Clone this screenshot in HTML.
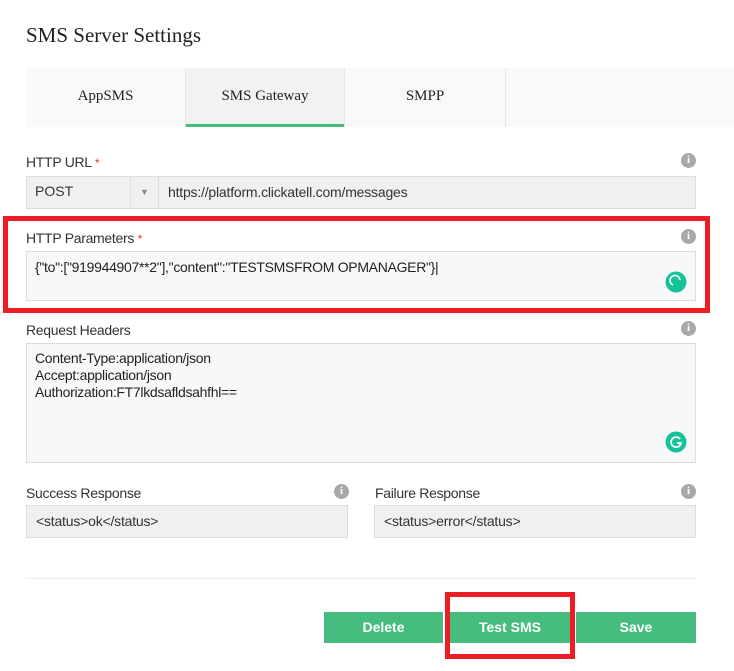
<!DOCTYPE html>
<html><head><meta charset="utf-8"><style>
*{box-sizing:border-box;margin:0;padding:0}
body{width:734px;height:671px;background:#fff;position:relative;overflow:hidden;font-family:"Liberation Sans",sans-serif;color:#333}
.a{position:absolute}
.title{left:26px;top:23px;font-family:"Liberation Serif",serif;font-size:21px;color:#222}
.tabs{left:26px;top:68px;width:708px;height:59px;background:#f9f9f9}
.tab{position:absolute;top:0;height:59px;line-height:56px;text-align:center;font-family:"Liberation Serif",serif;font-size:15px;color:#222}
.lbl{font-size:14px;color:#333;letter-spacing:-0.3px}
.req{color:#e33;font-size:12px}
.box{background:#f0f0f0;border:1px solid #ddd;font-size:14px;color:#333;padding-left:9px;letter-spacing:-0.2px}
.ta{background:#f8f8fa;border:1px solid #ddd;font-size:14px;color:#222;padding:7px 8px;line-height:17px;letter-spacing:-0.3px}
.info{width:15px;height:15px;border-radius:50%;background:#a8a8a8;color:#fff;font-size:11px;font-weight:bold;text-align:center;line-height:15px;font-family:"Liberation Serif",serif}
.g{width:21px;height:21px;border-radius:50%;background:#15c39a}
.btn{top:612px;height:31px;background:#46bd7f;color:#fff;font-size:14px;font-weight:bold;text-align:center;line-height:31px;width:120px}
.red{border:5px solid #ee1c25}
</style></head><body>
<div class="a title">SMS Server Settings</div>
<div class="a tabs">
 <div class="tab" style="left:0;width:159px">AppSMS</div>
 <div class="tab" style="left:159px;width:160px;background:#f2f2f2;border-left:1px solid #e6e6e6;border-right:1px solid #e6e6e6">SMS Gateway<div style="position:absolute;left:0;right:0;bottom:0;height:3px;background:#46bd7f"></div></div>
 <div class="tab" style="left:319px;width:161px;border-right:1px solid #e6e6e6">SMPP</div>
</div>

<div class="a lbl" style="left:26px;top:154px">HTTP URL <span class="req">*</span></div>
<div class="a info" style="left:681px;top:153px">i</div>
<div class="a box" style="left:26px;top:176px;width:670px;height:33px"></div>
<div class="a" style="left:26px;top:176px;width:104px;height:33px;line-height:31px;padding-left:9px;font-size:14px">POST</div>
<div class="a" style="left:130px;top:177px;width:29px;height:31px;border-left:1px solid #ddd;border-right:1px solid #ddd;text-align:center;line-height:31px;font-size:9px;color:#888">▼</div>
<div class="a" style="left:168px;top:176px;line-height:33px;font-size:14px;letter-spacing:-0.2px">https://platform.clickatell.com/messages</div>

<div class="a red" style="left:3px;top:216px;width:707px;height:97px"></div>
<div class="a lbl" style="left:26px;top:230px">HTTP Parameters <span class="req">*</span></div>
<div class="a info" style="left:681px;top:229px">i</div>
<div class="a ta" style="left:26px;top:251px;width:670px;height:50px">{"to":["919944907**2"],"content":"TESTSMSFROM OPMANAGER"}|</div>
<svg class="a" style="left:665px;top:271px" width="22" height="22"><circle cx="11" cy="11" r="10.5" fill="#15c39a"/><path d="M8 14 A5 5 0 1 1 15 9" stroke="#fff" stroke-width="1.6" fill="none"/></svg>

<div class="a lbl" style="left:26px;top:322px">Request Headers</div>
<div class="a info" style="left:681px;top:321px">i</div>
<div class="a ta" style="left:26px;top:343px;width:670px;height:120px;padding-top:6px">Content-Type:application/json<br>Accept:application/json<br>Authorization:FT7lkdsafldsahfhl==</div>
<svg class="a" style="left:665px;top:431px" width="22" height="22"><circle cx="11" cy="11" r="10.5" fill="#15c39a"/><path d="M15 8 A5 5 0 1 0 16 12 L12 12" stroke="#fff" stroke-width="1.8" fill="none"/></svg>

<div class="a lbl" style="left:26px;top:485px">Success Response</div>
<div class="a info" style="left:334px;top:484px">i</div>
<div class="a box" style="left:26px;top:505px;width:322px;height:33px;line-height:31px">&lt;status&gt;ok&lt;/status&gt;</div>
<div class="a lbl" style="left:375px;top:485px">Failure Response</div>
<div class="a info" style="left:681px;top:484px">i</div>
<div class="a box" style="left:374px;top:505px;width:322px;height:33px;line-height:31px">&lt;status&gt;error&lt;/status&gt;</div>

<div class="a" style="left:26px;top:578px;width:670px;height:1px;background:#ececec"></div>
<div class="a btn" style="left:324px;width:119px">Delete</div>
<div class="a btn" style="left:450px">Test SMS</div>
<div class="a btn" style="left:576px">Save</div>
<div class="a red" style="left:445px;top:592px;width:130px;height:67px"></div>
</body></html>
